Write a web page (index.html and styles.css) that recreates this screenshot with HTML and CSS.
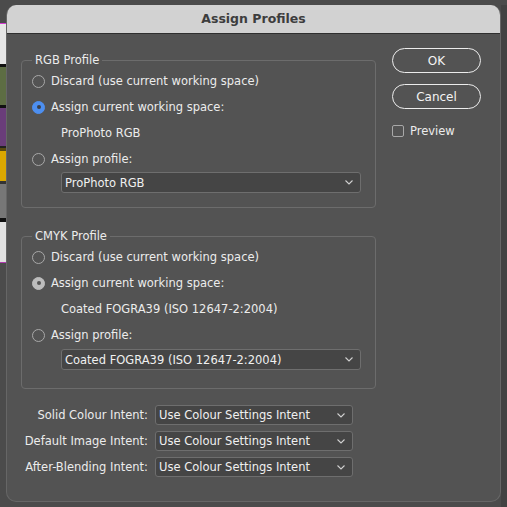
FILE: index.html
```html
<!DOCTYPE html>
<html>
<head>
<meta charset="utf-8">
<link rel="stylesheet" href="styles.css">
</head>
<body>
<div class="screen">
  <div class="sidebar">
    <div class="sb sb-bg"></div>
    <div class="sb sb-light"></div>
    <div class="sb sb-olive"></div>
    <div class="sb sb-purple"></div>
    <div class="sb sb-yellow"></div>
    <div class="sb sb-grey"></div>
    <div class="sb sb-light2"></div>
  </div>
  <div class="window">
    <div class="titlebar">Assign Profiles</div>
    <div class="content">
      <div class="main">
        <fieldset class="group group-rgb">
          <legend>RGB Profile</legend>
          <div class="row"><span class="radio"></span>Discard (use current working space)</div>
          <div class="row"><span class="radio radio-on"></span>Assign current working space:</div>
          <div class="row indent">ProPhoto RGB</div>
          <div class="row"><span class="radio"></span>Assign profile:</div>
          <div class="select select-wide"><span>ProPhoto RGB</span><svg class="chev" width="8" height="5" viewBox="0 0 8 5"><polyline points="0.5,0.5 4,4 7.5,0.5" fill="none" stroke="#cfcfcf" stroke-width="1.1"/></svg></div>
        </fieldset>
        <fieldset class="group group-cmyk">
          <legend>CMYK Profile</legend>
          <div class="row"><span class="radio"></span>Discard (use current working space)</div>
          <div class="row"><span class="radio radio-dis"></span>Assign current working space:</div>
          <div class="row indent">Coated FOGRA39 (ISO 12647-2:2004)</div>
          <div class="row"><span class="radio"></span>Assign profile:</div>
          <div class="select select-wide"><span>Coated FOGRA39 (ISO 12647-2:2004)</span><svg class="chev" width="8" height="5" viewBox="0 0 8 5"><polyline points="0.5,0.5 4,4 7.5,0.5" fill="none" stroke="#cfcfcf" stroke-width="1.1"/></svg></div>
        </fieldset>
        <div class="intents">
          <span class="ilabel">Solid Colour Intent:</span>
          <div class="select"><span>Use Colour Settings Intent</span><svg class="chev" width="8" height="5" viewBox="0 0 8 5"><polyline points="0.5,0.5 4,4 7.5,0.5" fill="none" stroke="#cfcfcf" stroke-width="1.1"/></svg></div>
          <span class="ilabel">Default Image Intent:</span>
          <div class="select"><span>Use Colour Settings Intent</span><svg class="chev" width="8" height="5" viewBox="0 0 8 5"><polyline points="0.5,0.5 4,4 7.5,0.5" fill="none" stroke="#cfcfcf" stroke-width="1.1"/></svg></div>
          <span class="ilabel">After-Blending Intent:</span>
          <div class="select"><span>Use Colour Settings Intent</span><svg class="chev" width="8" height="5" viewBox="0 0 8 5"><polyline points="0.5,0.5 4,4 7.5,0.5" fill="none" stroke="#cfcfcf" stroke-width="1.1"/></svg></div>
        </div>
      </div>
      <div class="side">
        <button class="btn">OK</button>
        <button class="btn">Cancel</button>
        <div class="check"><span class="box"></span>Preview</div>
      </div>
    </div>
  </div>
  <div class="rightbar"></div>
</div>
</body>
</html>
```
FILE: styles.css
```css
* { box-sizing: border-box; }
html, body { margin: 0; padding: 0; }
body {
  background: #4b4b4b;
  font-family: "DejaVu Sans", "Liberation Sans", sans-serif;
  font-size: 11.5px;
  color: #ececec;
  width: 507px;
  height: 507px;
  overflow: hidden;
}
.screen {
  display: flex;
  height: 507px;
}
.sidebar {
  width: 6px;
  display: flex;
  flex-direction: column;
}
.sb { flex: none; }
.sb-bg { height: 24px; background: #4b4b4b; border-bottom: 1px solid #d23ad0; }
.sb-light { height: 43px; background: #e6e6e6; border-bottom: 3px solid #111; }
.sb-olive { height: 41px; background: #5d6d43; border-bottom: 3px solid #111; }
.sb-purple { height: 40px; background: #6a3d7a; border-bottom: 2px solid #222; }
.sb-yellow { height: 36px; background: #dba800; border-top: 3px solid #5a4a10; border-bottom: 3px solid #333; }
.sb-grey { height: 38px; background: #777; border-bottom: 4px solid #111; }
.sb-light2 { height: 41px; background: #e2e2e2; border-bottom: 1px solid #b03ab0; }

.window {
  width: 495px;
  height: 497px;
  margin-top: 5px;
  background: #535353;
  border-radius: 10px;
  overflow: hidden;
  border: 1px solid #666;
  border-top: none;
  display: flex;
  flex-direction: column;
}
.titlebar {
  height: 29px;
  background: #d2d2d2;
  border-bottom: 1px solid #2f2f2f;
  color: #3d3d3d;
  font-weight: bold;
  font-size: 12.5px;
  text-align: center;
  line-height: 27px;
  flex: none;
}
.content {
  display: flex;
  padding: 14px 0 0 14px;
}
.main {
  width: 355px;
  display: flex;
  flex-direction: column;
  padding-top: 4px;
}
.group {
  margin: 0;
  padding: 0 10px 14px 10px;
  border: 1px solid #6c6c6c;
  border-radius: 4px;
  min-width: 0;
}
.group-cmyk {
  margin-top: 20px;
  padding-bottom: 18px;
}
.group legend {
  padding: 0 3px;
  line-height: 16px;
  color: #ececec;
}
.row {
  height: 26px;
  display: flex;
  align-items: center;
  white-space: nowrap;
}
.indent { padding-left: 29px; }
.radio {
  width: 13px;
  height: 13px;
  border-radius: 50%;
  border: 1px solid #a8a8a8;
  margin-right: 6px;
  flex: none;
  display: flex;
  align-items: center;
  justify-content: center;
}
.radio-on {
  background: #4d8ff0;
  border-color: #4d8ff0;
}
.radio-on::after {
  content: "";
  width: 4px;
  height: 4px;
  border-radius: 50%;
  background: #3a3f48;
}
.radio-dis {
  background: #bdbdbd;
  border-color: #bdbdbd;
}
.radio-dis::after {
  content: "";
  width: 4px;
  height: 4px;
  border-radius: 50%;
  background: #555;
}
.select {
  height: 20px;
  background: #454545;
  border: 1px solid #6e6e6e;
  border-radius: 3px;
  display: flex;
  align-items: center;
  justify-content: space-between;
  padding: 0 7px 0 3px;
  white-space: nowrap;
  color: #f0f0f0;
}
.select-wide {
  margin-left: 29px;
  width: 300px;
  height: 21px;
}
.group-cmyk .select-wide { margin-top: 1px; }
.chev { flex: none; }
.intents {
  display: grid;
  grid-template-columns: 127px 198px;
  column-gap: 7px;
  grid-auto-rows: 26px;
  align-items: center;
  margin-top: 13px;
}
.ilabel {
  text-align: right;
  white-space: nowrap;
}
.side {
  margin-left: 16px;
  width: 89px;
  display: flex;
  flex-direction: column;
}
.btn {
  height: 25px;
  width: 89px;
  border: 1.5px solid #ececec;
  border-radius: 13px;
  background: transparent;
  color: #f4f4f4;
  font-family: "DejaVu Sans", "Liberation Sans", sans-serif;
  font-size: 12px;
  padding: 0;
  margin: 0 0 11px 0;
}
.check {
  display: flex;
  align-items: center;
  margin-top: 5px;
  height: 12px;
}
.box {
  width: 12px;
  height: 12px;
  border: 1px solid #a8a8a8;
  border-radius: 2px;
  margin-right: 6px;
}
.rightbar {
  flex: 1;
  margin-top: 5px;
  background: #424242;
}
```
